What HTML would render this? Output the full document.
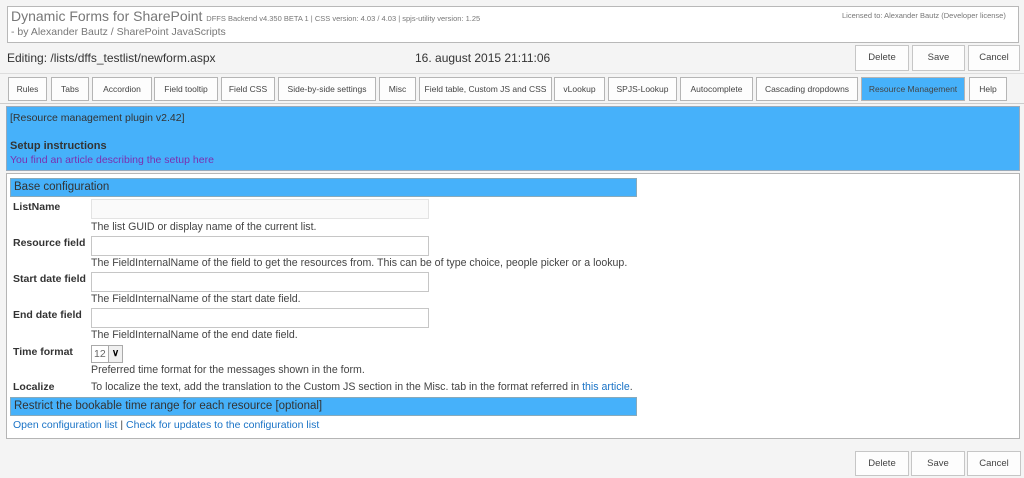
<!DOCTYPE html>
<html><head><style>
*{box-sizing:border-box;margin:0;padding:0}
body{width:1024px;height:478px;background:#f4f4f4;font-family:"Liberation Sans",sans-serif;color:#444;position:relative;overflow:hidden;font-size:11px}
.a{position:absolute;white-space:nowrap}
.btn{position:absolute;background:#fdfdfd;border:1px solid #c6c6c6;font-size:9.5px;text-align:center;color:#444}
.tab{position:absolute;top:77px;height:24px;line-height:22px;background:#fdfdfd;border:1px solid #b5b5b5;font-size:8.5px;text-align:center;color:#444}
.inp{position:absolute;left:91px;width:338px;height:20px;background:#fff;border:1px solid #c6c6c6}
.lb{position:absolute;left:13px;font-weight:bold;font-size:10.5px;color:#333}
.ds{position:absolute;left:91px;font-size:10.6px;color:#444}
.bar{position:absolute;left:10px;width:627px;height:19px;background:#46b1fa;border:1px solid #8ab;font-size:11.5px;line-height:17px;padding-left:3px;color:#333}
a{color:#1a73c6;text-decoration:none}
</style></head><body>
<div class="a" style="left:7px;top:6px;width:1012px;height:37px;background:#fff;border:1px solid #b8b8b8"></div>
<div class="a" style="left:11px;top:8px;font-size:14px;color:#777">Dynamic Forms for SharePoint <span style="font-size:7.5px">DFFS Backend v4.350 BETA 1 | CSS version: 4.03 / 4.03 | spjs-utility version: 1.25</span></div>
<div class="a" style="left:11px;top:26px;font-size:10.5px;color:#777">- by Alexander Bautz / SharePoint JavaScripts</div>
<div class="a" style="left:842px;top:11px;font-size:7.5px;color:#777">Licensed to: Alexander Bautz (Developer license)</div>
<div class="a" style="left:7px;top:51px;font-size:12px;color:#333">Editing: /lists/dffs_testlist/newform.aspx</div>
<div class="a" style="left:415px;top:51px;font-size:12px;color:#333">16. august 2015 21:11:06</div>
<div class="btn" style="left:855px;top:45px;width:54px;height:26px;line-height:24px">Delete</div>
<div class="btn" style="left:912px;top:45px;width:53px;height:26px;line-height:24px">Save</div>
<div class="btn" style="left:968px;top:45px;width:52px;height:26px;line-height:24px">Cancel</div>
<div class="a" style="left:0;top:73px;width:1024px;border-top:1px solid #ddd"></div>
<div class="tab" style="left:8px;width:39px">Rules</div>
<div class="tab" style="left:51px;width:38px">Tabs</div>
<div class="tab" style="left:92px;width:60px">Accordion</div>
<div class="tab" style="left:154px;width:64px">Field tooltip</div>
<div class="tab" style="left:221px;width:54px">Field CSS</div>
<div class="tab" style="left:278px;width:98px">Side-by-side settings</div>
<div class="tab" style="left:379px;width:37px">Misc</div>
<div class="tab" style="left:419px;width:133px">Field table, Custom JS and CSS</div>
<div class="tab" style="left:554px;width:51px">vLookup</div>
<div class="tab" style="left:608px;width:69px">SPJS-Lookup</div>
<div class="tab" style="left:680px;width:73px">Autocomplete</div>
<div class="tab" style="left:756px;width:102px">Cascading dropdowns</div>
<div class="tab" style="left:861px;width:104px;background:#46b1fa">Resource Management</div>
<div class="tab" style="left:969px;width:38px">Help</div>
<div class="a" style="left:0;top:103px;width:1024px;border-top:1px solid #ccc"></div>
<div class="a" style="left:6px;top:106px;width:1014px;height:65px;background:#46b1fa;border:1px solid #9ab"></div>
<div class="a" style="left:10px;top:112px;font-size:10.5px;color:#333">[Resource management plugin v2.42]</div>
<div class="a" style="left:10px;top:140px;font-size:11px;font-weight:bold;color:#333">Setup instructions</div>
<div class="a" style="left:10px;top:154px;font-size:10.5px;color:#7a2fb0">You find an article describing the setup here</div>
<div class="a" style="left:6px;top:173px;width:1014px;height:266px;background:#fff;border:1px solid #b5b5b5"></div>
<div class="bar" style="top:178px">Base configuration</div>
<div class="lb" style="top:201px">ListName</div>
<div class="inp" style="top:199px;background:#fafafa;border-color:#e3e3e3"></div>
<div class="ds" style="top:221px">The list GUID or display name of the current list.</div>
<div class="lb" style="top:237px">Resource field</div>
<div class="inp" style="top:236px"></div>
<div class="ds" style="top:257px">The FieldInternalName of the field to get the resources from. This can be of type choice, people picker or a lookup.</div>
<div class="lb" style="top:273px">Start date field</div>
<div class="inp" style="top:272px"></div>
<div class="ds" style="top:293px">The FieldInternalName of the start date field.</div>
<div class="lb" style="top:309px">End date field</div>
<div class="inp" style="top:308px"></div>
<div class="ds" style="top:329px">The FieldInternalName of the end date field.</div>
<div class="lb" style="top:346px">Time format</div>
<div class="a" style="left:91px;top:345px;width:32px;height:18px;border:1px solid #aaa;background:#fff;font-size:10.5px;line-height:16px;padding-left:2px;color:#666">12<span style="position:absolute;right:0;top:0;width:14px;height:16px;border-left:1px solid #aaa;background:#f0f0f0;text-align:center;color:#000;font-weight:bold;font-size:10px">&#8744;</span></div>
<div class="ds" style="top:364px">Preferred time format for the messages shown in the form.</div>
<div class="lb" style="top:381px">Localize</div>
<div class="ds" style="top:381px">To localize the text, add the translation to the Custom JS section in the Misc. tab in the format referred in <a>this article</a>.</div>
<div class="bar" style="top:397px">Restrict the bookable time range for each resource [optional]</div>
<div class="a" style="left:13px;top:419px;font-size:10.5px"><a>Open configuration list</a> | <a>Check for updates to the configuration list</a></div>
<div class="btn" style="left:855px;top:451px;width:54px;height:25px;line-height:23px">Delete</div>
<div class="btn" style="left:911px;top:451px;width:54px;height:25px;line-height:23px">Save</div>
<div class="btn" style="left:967px;top:451px;width:54px;height:25px;line-height:23px">Cancel</div>
</body></html>
